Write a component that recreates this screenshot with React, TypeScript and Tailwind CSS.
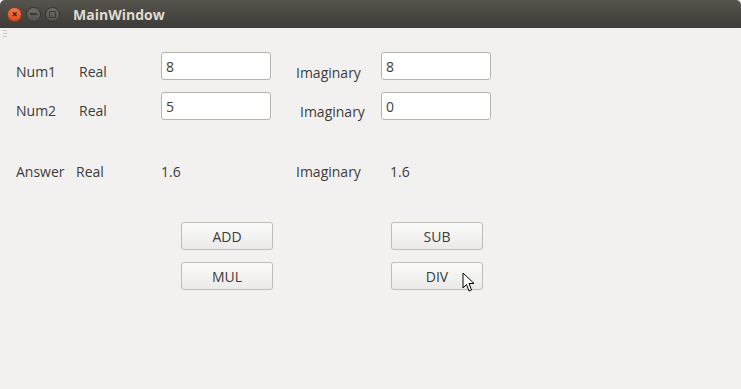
import React from 'react';

const font = { fontFamily: '"Open Sans", "Noto Sans", sans-serif' };

function Field({ value }: { value: string }) {
  return (
    <input
      readOnly
      value={value}
      className="w-[110px] h-[28px] bg-white border border-[#b7b4ae] rounded-[3px] px-[4px] text-[14px] text-[#3c3c3c] outline-none"
    />
  );
}

function Btn({ label, cursor }: { label: string; cursor?: boolean }) {
  return (
    <div className="relative w-[92px] h-[28px]">
      <button className="w-full h-full rounded-[3px] border border-[#bfbcb6] bg-gradient-to-b from-[#fbfbfa] to-[#ebeae8] text-[14px] text-[#3c3c3c]">
        {label}
      </button>
      {cursor && (
        <svg className="absolute left-[71px] top-[10px]" width="14" height="21" viewBox="0 0 14 21">
          <path d="M1 1 L1 16 L4.5 12.5 L7 19 L9.5 18 L7 11.5 L12 11.5 Z" fill="#fff" stroke="#000" strokeWidth="1" strokeLinejoin="round" />
        </svg>
      )}
    </div>
  );
}

export default function App() {
  return (
    <div className="w-[741px] h-[389px] bg-[#f2f1f0] overflow-hidden" style={font}>
      {/* Title bar */}
      <div className="h-[28px] rounded-t-[5px] bg-gradient-to-b from-[#57544d] to-[#3d3c38] flex items-center pl-[7px]">
        <div className="w-[15px] h-[15px] rounded-full bg-gradient-to-b from-[#f3794e] to-[#df4a17] border border-[#8a3a1c] flex items-center justify-center text-[#3b1a0e] text-[10px] leading-none font-bold">
          ×
        </div>
        <div className="ml-[4px] w-[15px] h-[15px] rounded-full bg-gradient-to-b from-[#6e6c67] to-[#56544f] border border-[#34332f] flex items-center justify-center">
          <div className="w-[7px] h-[2px] bg-[#3a3935]" />
        </div>
        <div className="ml-[4px] w-[15px] h-[15px] rounded-full bg-gradient-to-b from-[#6e6c67] to-[#56544f] border border-[#34332f] flex items-center justify-center">
          <div className="w-[7px] h-[7px] border-[1.5px] border-[#3a3935] rounded-[1px]" />
        </div>
        <span className="ml-[13px] text-[14px] font-bold text-[#dfdbd2]">MainWindow</span>
      </div>

      {/* Grip */}
      <div className="relative h-0">
        <div className="absolute left-[3px] top-[2px] flex flex-col gap-[2px]">
          <div className="w-[4px] h-[1px] bg-[#c9c7c3]" />
          <div className="w-[4px] h-[1px] bg-[#c9c7c3]" />
          <div className="w-[4px] h-[1px] bg-[#c9c7c3]" />
        </div>
      </div>

      <div className="pl-[16px] pt-[24px] text-[14px] text-[#3c3c3c]">
        {/* Num1 */}
        <div className="flex items-center h-[28px]">
          <span className="w-[63px] pt-[10px]">Num1</span>
          <span className="w-[82px] pt-[10px]">Real</span>
          <Field value="8" />
          <span className="ml-[25px] w-[85px] pt-[12px]">Imaginary</span>
          <Field value="8" />
        </div>

        {/* Num2 */}
        <div className="flex items-center h-[28px] mt-[12px]">
          <span className="w-[63px] pt-[9px]">Num2</span>
          <span className="w-[82px] pt-[9px]">Real</span>
          <Field value="5" />
          <span className="ml-[29px] w-[81px] pt-[11px]">Imaginary</span>
          <Field value="0" />
        </div>

        {/* Answer */}
        <div className="flex items-center h-[28px] mt-[37px]">
          <span className="w-[60px]">Answer</span>
          <span className="w-[85px]">Real</span>
          <span className="w-[135px]">1.6</span>
          <span className="w-[94px]">Imaginary</span>
          <span>1.6</span>
        </div>

        {/* Buttons */}
        <div className="ml-[165px] mt-[37px] grid grid-cols-[92px_92px] gap-x-[118px] gap-y-[12px]">
          <Btn label="ADD" />
          <Btn label="SUB" />
          <Btn label="MUL" />
          <Btn label="DIV" cursor />
        </div>
      </div>
    </div>
  );
}
